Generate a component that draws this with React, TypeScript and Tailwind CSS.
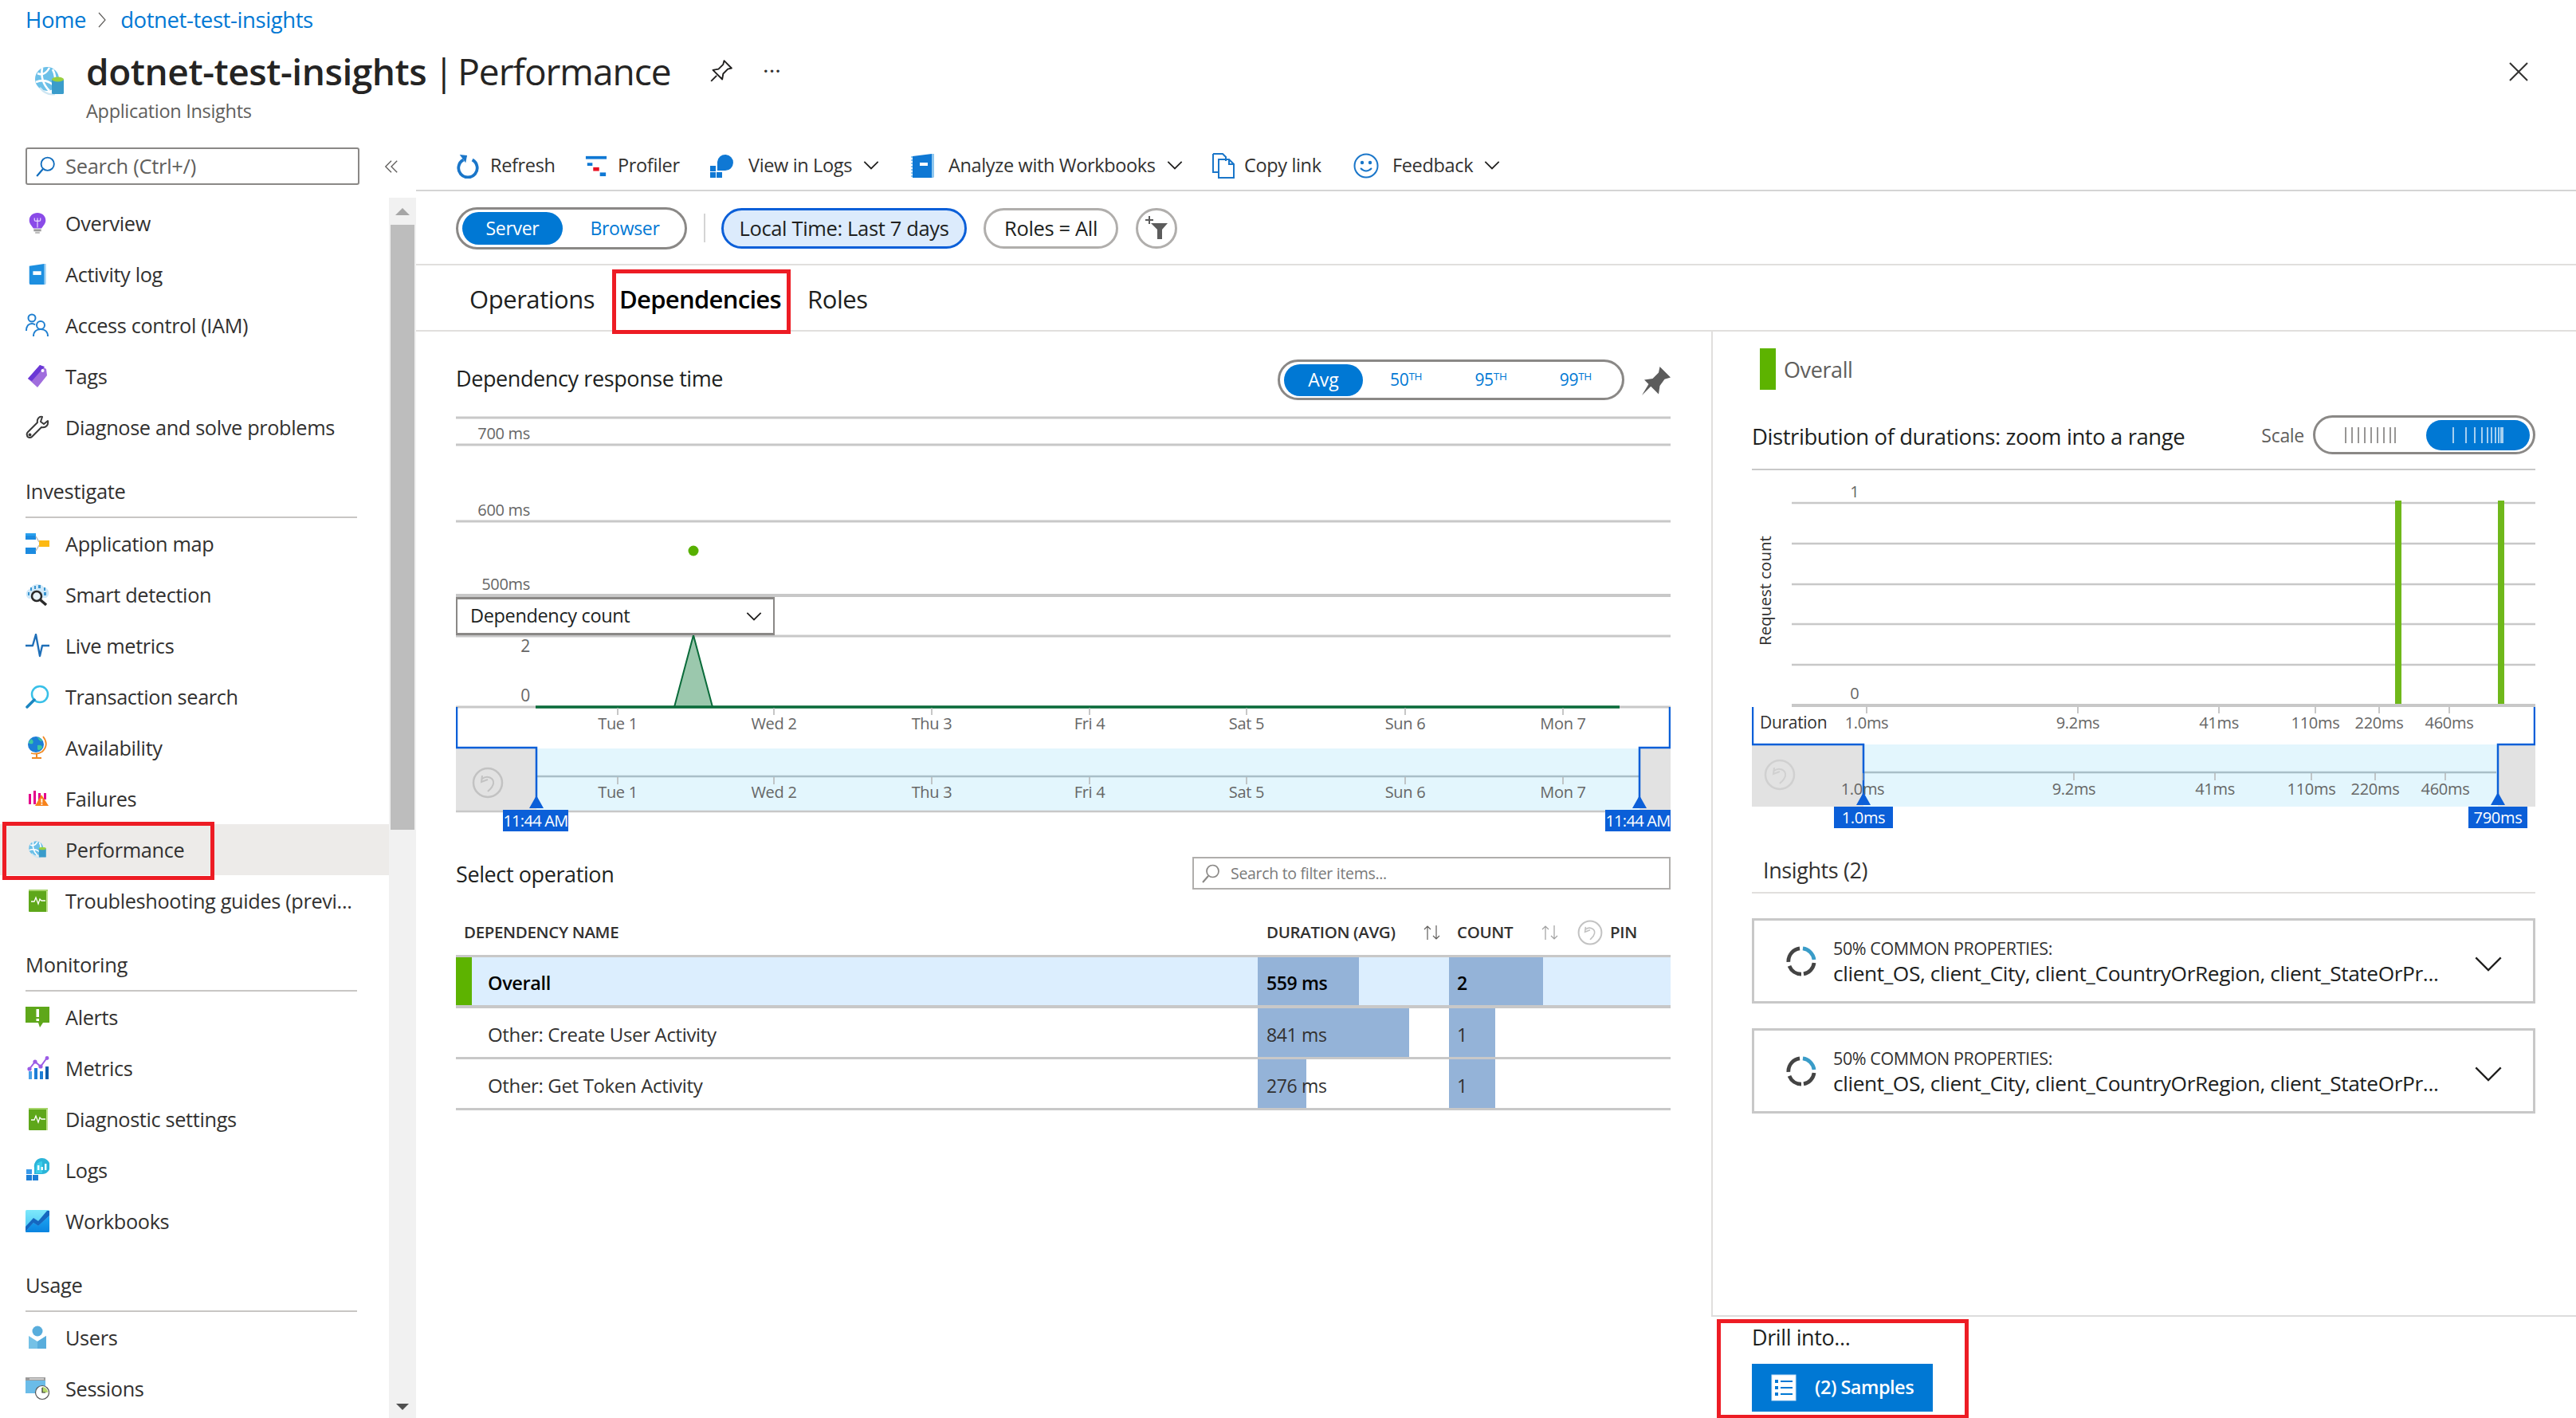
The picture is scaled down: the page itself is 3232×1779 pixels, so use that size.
import React from "react";

type IP = { className?: string };

const AppInsightsIcon = ({ className }: IP) => (
  <svg viewBox="0 0 40 40" className={className}>
    <circle cx="17" cy="17" r="15" fill="#6cc0e8" />
    <path d="M5 10 Q14 14 20 3 M3 21 Q14 16 24 24 M11 3 Q8 20 20 32 M24 5 Q29 14 26 24" stroke="#fff" strokeWidth="2.6" fill="none" />
    <path d="M8 28 Q16 38 27 36" stroke="#cfe6f2" strokeWidth="2.4" fill="none" />
    <rect x="23" y="17" width="15" height="19" rx="1.5" fill="#3a9ccb" />
    <ellipse cx="30.5" cy="17.5" rx="7.5" ry="3" fill="#9ad03f" />
  </svg>
);

const Overview = ({ className }: IP) => (
  <svg viewBox="0 0 30 30" className={className}>
    <path d="M15 1C9 1 4 5 4 11c0 5 3 7 5.500 11h11C23 18 26 16 26 11 26 5 21 1 15 1z" fill="#8a4be8" />
    <path d="M11 8v3c0 1.500 4 1.500 4 0V8M19 8v3c0 1.500-4 1.500-4 0M15 12v9" stroke="#e6d6ff" strokeWidth="1.300" fill="none" />
    <rect x="10" y="23" width="10" height="3" fill="#9a9a9a" />
    <rect x="12" y="26.500" width="6" height="2.500" fill="#bdbdbd" />
  </svg>
);
const BookBlue = ({ className }: IP) => (
  <svg viewBox="0 0 30 30" className={className}>
    <path d="M4 4 L24 1 L26 1 V28 L24 29 H6 Q4 29 4 27z" fill="#1d8fe0" />
    <path d="M24 1h2v27l-2 1z" fill="#9ed0f2" />
    <rect x="9" y="11" width="11" height="5" fill="#fff" />
  </svg>
);
const Iam = ({ className }: IP) => (
  <svg viewBox="0 0 30 30" fill="none" stroke="#1f7fd0" strokeWidth="2" className={className}>
    <circle cx="8" cy="6" r="4.500" />
    <path d="M1 22c0-6 3-9 7-9 2 0 3 .5 4 1.500" />
    <circle cx="19" cy="15" r="5" />
    <path d="M10 29c0-6 4-9 9-9s9 3 9 9" />
  </svg>
);
const Tag = ({ className }: IP) => (
  <svg viewBox="0 0 30 30" className={className}>
    <path d="M18 1 L26 6 L27 14 L15 29 L3 18z" fill="#a06ddd" />
    <path d="M18 1 L3 18 L8 21 L24 3z" fill="#6a38d6" />
    <circle cx="21.500" cy="8" r="2" fill="#fff" />
  </svg>
);
const Wrench = ({ className }: IP) => (
  <svg viewBox="0 0 30 30" fill="none" stroke="#3a3a3a" strokeWidth="2" strokeLinejoin="round" className={className}>
    <path d="M21 2 L19 8 L23 11 L28 7 C29 12 26 16 20 15 L8 27 C6 29 2 28 2 25 C1 23 2 22 3 21 L15 9 C14 5 17 1 21 2z" />
    <circle cx="5.500" cy="24.500" r="1" />
  </svg>
);
const AppMap = ({ className }: IP) => (
  <svg viewBox="0 0 30 30" className={className}>
    <rect x="0" y="2" width="13" height="8" fill="#1c8be0" />
    <rect x="0" y="2" width="13" height="3" fill="#2aa0ee" />
    <rect x="0" y="20" width="13" height="8" fill="#1c8be0" />
    <rect x="17" y="11" width="13" height="8" fill="#fdb913" />
    <path d="M13 6 L17 13 M13 24 L17 17" stroke="#bdbdbd" strokeWidth="1.500" />
  </svg>
);
const Smart = ({ className }: IP) => (
  <svg viewBox="0 0 30 30" className={className}>
    <path d="M4 20C-1 17 0 9 6 8 8 1 20 0 23 6 29 6 32 15 26 19z" fill="#cfe8f8" />
    <g fill="#3a95d0">
      <rect x="6" y="6" width="2" height="4" />
      <rect x="11" y="4" width="2" height="4" />
      <rect x="16" y="3" width="3" height="4" />
      <rect x="23" y="6" width="2" height="4" />
      <rect x="3" y="12" width="2" height="4" />
      <rect x="23" y="12" width="3" height="4" />
    </g>
    <circle cx="14" cy="17" r="6" fill="#e8f4fb" stroke="#2a2a2a" strokeWidth="2.500" />
    <path d="M18.500 21.500 L26 28" stroke="#2a2a2a" strokeWidth="3.500" />
  </svg>
);
const Live = ({ className }: IP) => (
  <svg viewBox="0 0 30 30" className={className}>
    <path d="M0 15 H9 L13 1 L18 28 L21 15 H30" fill="none" stroke="#1f6fb8" strokeWidth="2.400" strokeLinejoin="round" />
  </svg>
);
const Transaction = ({ className }: IP) => (
  <svg viewBox="0 0 30 30" className={className}>
    <circle cx="18" cy="12" r="10" fill="#fff" stroke="#38c0e8" strokeWidth="2.500" />
    <path d="M11 19 L2 28" stroke="#1c86c0" strokeWidth="3.500" strokeLinecap="round" />
  </svg>
);
const Avail = ({ className }: IP) => (
  <svg viewBox="0 0 30 30" className={className}>
    <circle cx="13" cy="11" r="10" fill="#1c7ed6" />
    <path d="M7 4 Q11 6 9 10 Q4 11 4 8z M15 12 Q21 11 21 15 Q17 20 15 17z M15 2 Q20 3 21 7 Q17 7 15 2z" fill="#3cc8a0" />
    <path d="M22 1 Q30 11 21 20 Q15 24 7 22" stroke="#f08a24" strokeWidth="1.800" fill="none" />
    <path d="M14 23v4M8 28h12" stroke="#f08a24" strokeWidth="2" />
  </svg>
);
const Failures = ({ className }: IP) => (
  <svg viewBox="0 0 30 30" className={className}>
    <g fill="#e3008c">
      <rect x="4" y="9" width="3" height="13" />
      <rect x="10" y="5" width="3" height="17" />
      <rect x="16" y="8" width="3" height="14" />
      <rect x="23" y="8" width="3" height="8" />
    </g>
    <path d="M20 10 L29 24 H12z" fill="#f7821b" />
    <rect x="19.500" y="15" width="1.800" height="5" fill="#fff" />
    <rect x="19.500" y="21" width="1.800" height="1.800" fill="#fff" />
  </svg>
);
const BookGreen = ({ className }: IP) => (
  <svg viewBox="0 0 30 30" className={className}>
    <rect x="4" y="1" width="24" height="28" rx="1" fill="#5ea71a" />
    <rect x="26" y="1" width="2" height="28" fill="#bfe08e" />
    <rect x="4" y="1" width="24" height="2" fill="#a6d46a" />
    <path d="M7 16 H11 L13 11 L16 19 L18 13 L20 15 H25" stroke="#fff" strokeWidth="1.300" fill="none" />
  </svg>
);
const Alerts = ({ className }: IP) => (
  <svg viewBox="0 0 30 30" className={className}>
    <path d="M0 2 H30 V22 H22 L18 28 L16 22 H0z" fill="#5ea71a" />
    <rect x="13.500" y="5" width="3.500" height="10" fill="#fff" />
    <rect x="13.500" y="17" width="3.500" height="3" fill="#fff" />
  </svg>
);
const Metrics = ({ className }: IP) => (
  <svg viewBox="0 0 30 30" className={className}>
    <rect x="4" y="19" width="4" height="10" fill="#4aa3e8" />
    <rect x="11" y="15" width="4" height="14" fill="#1c7ed6" />
    <rect x="18" y="19" width="4" height="10" fill="#1c7ed6" />
    <rect x="25" y="13" width="4" height="16" fill="#0d5cab" />
    <path d="M5 16 L12 7 L19 13 L27 2" stroke="#9c5ce6" strokeWidth="2" fill="none" />
    <g fill="#9c5ce6">
      <circle cx="5" cy="16" r="2.600" />
      <circle cx="12" cy="7" r="2.600" />
      <circle cx="19" cy="13" r="2.600" />
      <circle cx="27" cy="2.500" r="2.400" />
    </g>
  </svg>
);
const Logs = ({ className }: IP) => (
  <svg viewBox="0 0 30 30" className={className}>
    <rect x="1" y="14" width="7" height="6" fill="#3a9bea" />
    <rect x="1" y="21" width="7" height="7" fill="#1c7ed6" />
    <rect x="9" y="21" width="7" height="7" fill="#1c7ed6" />
    <path d="M11 20V12A10 10 0 1 1 21 20z" fill="#2bb4d8" />
    <path d="M13 19V12A8 8 0 0 1 21 4V19z" fill="#3ccdea" />
    <g fill="#fff">
      <rect x="15" y="9" width="2.400" height="6" />
      <rect x="19.500" y="11" width="2.400" height="4" />
      <rect x="24" y="7" width="2.400" height="8" />
    </g>
  </svg>
);
const Workbooks = ({ className }: IP) => (
  <svg viewBox="0 0 30 30" className={className}>
    <defs>
      <linearGradient id="wbg" x1="0" y1="0" x2="0" y2="1">
        <stop offset="0" stopColor="#7de8fb" />
        <stop offset="1" stopColor="#46c3f4" />
      </linearGradient>
      <linearGradient id="wbf" x1="0" y1="0" x2="0" y2="1">
        <stop offset="0" stopColor="#1ea6f2" />
        <stop offset="1" stopColor="#0a84e0" />
      </linearGradient>
    </defs>
    <rect x="0" y="1" width="30" height="28" rx="1.500" fill="url(#wbg)" />
    <path d="M0 28 L10 17 L16 21 L30 8 V27.500 Q30 29 28.500 29 H1.500 Q0 29 0 28z" fill="url(#wbf)" />
    <path d="M0 22 L10 11 L16 15 L27 2 L30 2 V8 L16 21 L10 17 L0 28z" fill="#1567c0" />
  </svg>
);
const Users = ({ className }: IP) => (
  <svg viewBox="0 0 30 30" className={className}>
    <circle cx="15" cy="7" r="6.500" fill="#58addc" />
    <path d="M4 13 L15 20 L26 13 V29 H4z" fill="#74c1e6" />
    <path d="M15 20 L26 13 V29 H15z" fill="#58addc" />
  </svg>
);
const Sessions = ({ className }: IP) => (
  <svg viewBox="0 0 30 30" className={className}>
    <rect x="0" y="1" width="25" height="20" fill="#6bbce8" />
    <rect x="0" y="1" width="25" height="4" fill="#9a9a9a" />
    <rect x="5" y="2.500" width="18" height="1" fill="#fff" />
    <circle cx="21" cy="20" r="8.500" fill="#fff" stroke="#555" strokeWidth="1.200" />
    <path d="M21 13 A7 7 0 0 1 28 20 H21z" fill="#b7d96a" />
    <path d="M21 14v6h4" stroke="#333" strokeWidth="1.200" fill="none" />
  </svg>
);
const SearchIcon = ({ className, color = "#0f6cbd" }: IP & { color?: string }) => (
  <svg viewBox="0 0 24 24" fill="none" stroke={color} strokeWidth="1.700" className={className}>
    <circle cx="14.500" cy="9" r="7.500" />
    <path d="M9 15 L2 23" strokeWidth="2" />
  </svg>
);
const ChevDown = ({ className, sw = 2.2 }: IP & { sw?: number }) => (
  <svg viewBox="0 0 24 14" fill="none" stroke="#201f1e" strokeWidth={sw} className={className}>
    <path d="M1 1 L12 12 L23 1" />
  </svg>
);
const Refresh = ({ className }: IP) => (
  <svg viewBox="0 0 32 32" className={className}>
    <path d="M10 6 A12.500 12.500 0 1 0 22 6" fill="none" stroke="#1a76c9" strokeWidth="4" transform="translate(0 2)" />
    <path d="M5 1 L15 2 L13 12z" fill="#1a76c9" />
  </svg>
);
const Profiler = ({ className }: IP) => (
  <svg viewBox="0 0 30 30" className={className}>
    <rect x="1" y="2" width="28" height="4" fill="#0f78d4" />
    <rect x="3" y="11" width="7" height="4" fill="#0f78d4" />
    <rect x="11" y="17" width="8" height="5" fill="#e81123" />
    <rect x="20" y="24" width="8" height="5" fill="#0f78d4" />
  </svg>
);
const ViewLogs = ({ className }: IP) => (
  <svg viewBox="0 0 32 32" className={className}>
    <rect x="1" y="16" width="7" height="7" fill="#0f78d4" />
    <rect x="1" y="24" width="7" height="7" fill="#0f78d4" />
    <rect x="9" y="24" width="7" height="7" fill="#0f78d4" />
    <path d="M10 22V11A10 10 0 1 1 20 22z" fill="#0f78d4" />
  </svg>
);
const Workbook = ({ className }: IP) => (
  <svg viewBox="0 0 30 32" className={className}>
    <path d="M2 4 L26 1 H29 V30 L26 31 H2z" fill="#0f78d4" />
    <path d="M26 1h3v29l-3 1z" fill="#8fc7ef" />
    <rect x="11" y="12" width="10" height="4" fill="#fff" />
    <path d="M1 4v27" stroke="#8fc7ef" strokeDasharray="2 2" strokeWidth="2" />
  </svg>
);
const Copy = ({ className }: IP) => (
  <svg viewBox="0 0 30 32" fill="none" stroke="#1a76c9" strokeWidth="2" className={className}>
    <path d="M2 1 H14 L18 5 V10 M2 1 V24 H9" />
    <path d="M9 8 H22 L28 14 V31 H9z" />
    <path d="M22 8v6h6" />
  </svg>
);
const Smile = ({ className }: IP) => (
  <svg viewBox="0 0 32 32" fill="none" stroke="#1a76c9" strokeWidth="2" className={className}>
    <circle cx="16" cy="16" r="14.500" />
    <path d="M9 19 Q16 26 23 19" />
    <circle cx="11" cy="12" r="1.200" fill="#1a76c9" />
    <circle cx="21" cy="12" r="1.200" fill="#1a76c9" />
  </svg>
);
const PinOutline = ({ className }: IP) => (
  <svg viewBox="0 0 24 24" fill="none" stroke="#201f1e" strokeWidth="1.600" strokeLinejoin="round" className={className}>
    <path d="M15 1 L23 9 L19 10 L14 15 L13 21 L3 11 L9 10 L14 5z" />
    <path d="M7 17 L1 23" />
  </svg>
);
const PinSolid = ({ className }: IP) => (
  <svg viewBox="0 0 24 24" fill="#5c5c5c" className={className}>
    <path d="M15 0 L24 9 L19 10.500 L15 16 L14 23 L2 11 L9 10 L14 5z" />
    <path d="M8 16 L0 24 L6 14z" />
  </svg>
);
const FilterAdd = ({ className }: IP) => (
  <svg viewBox="0 0 30 30" className={className}>
    <path d="M8 9 H29 L22 17 V29 H16 V17z" fill="#5c5c5c" />
    <path d="M1 5 H11 M6 0 V10" stroke="#5c5c5c" strokeWidth="2" />
  </svg>
);
const Spinner = ({ className }: IP) => (
  <svg viewBox="0 0 40 40" fill="none" strokeWidth="5" className={className}>
    <g transform="rotate(-90 20 20)">
      <circle cx="20" cy="20" r="17" pathLength={100} stroke="#3a9cc8" strokeDasharray="21 79" strokeDashoffset="-2" />
      <circle cx="20" cy="20" r="17" pathLength={100} stroke="#444" strokeDasharray="20 80" strokeDashoffset="-27" />
      <circle cx="20" cy="20" r="17" pathLength={100} stroke="#444" strokeDasharray="19 81" strokeDashoffset="-50" />
      <circle cx="20" cy="20" r="17" pathLength={100} stroke="#444" strokeDasharray="24 76" strokeDashoffset="-74" />
    </g>
  </svg>
);
const ListIcon = ({ className }: IP) => (
  <svg viewBox="0 0 32 34" className={className}>
    <rect x="1" y="1" width="30" height="32" fill="#fff" stroke="#cfe4f6" strokeWidth="1" />
    <g fill="#0078d4">
      <rect x="5" y="7" width="4" height="4" />
      <rect x="5" y="15" width="4" height="4" />
      <rect x="5" y="23" width="4" height="4" />
      <rect x="12" y="8" width="15" height="2" />
      <rect x="12" y="16" width="15" height="2" />
      <rect x="12" y="24" width="15" height="2" />
    </g>
  </svg>
);
const SortArrows = ({ className, color = "#605e5c" }: IP & { color?: string }) => (
  <svg viewBox="0 0 24 20" fill="none" stroke={color} strokeWidth="1.200" className={className}>
    <path d="M6 19V2M2 6l4-4 4 4" />
    <path d="M17 1v17M13 14l4 4 4-4" />
  </svg>
);
const UndoCircle = ({ className, color = "#c2c2c2" }: IP & { color?: string }) => (
  <svg viewBox="0 0 40 40" fill="none" stroke={color} strokeWidth="2.500" className={className}>
    <circle cx="20" cy="20" r="18" />
    <path d="M13 11 L12 19 L20 16 M13 15 C19 10 28 14 27 21 C26 26 23 28 20 31" strokeWidth="2" />
  </svg>
);

type NavItem = { label: string; Icon: React.FC<IP>; iconClass: string; active?: boolean };

const NavRow = ({ label, Icon, iconClass, active }: NavItem) => (
  <div className={`relative flex h-[64px] items-center pl-[32px] ${active ? "bg-[#edebe9]" : ""}`}>
    <span className="flex h-[32px] w-[30px] shrink-0 items-center justify-center">
      <Icon className={iconClass} />
    </span>
    <span className="ml-[20px] truncate pt-[1px] text-[25.300px] tracking-[-0.35px] text-[#323130]">{label}</span>
    {active && <div className="absolute left-[3px] top-[-3px] h-[73px] w-[266px] border-[5px] border-[#ed1c24]" />}
  </div>
);

const SectionHead = ({ label }: { label: string }) => (
  <div className="ml-[32px] mr-[40px] flex h-[82px] items-end border-b-[2px] border-[#c8c6c4] pb-[13px]">
    <span className="text-[25.500px] font-medium tracking-[-0.3px] text-[#323130]">{label}</span>
  </div>
);

const ic28 = "h-[30px] w-[28px]";
const ic30 = "h-[30px] w-[30px]";

const Sidebar = () => (
  <aside className="flex w-[522px] shrink-0 flex-col">
    <div className="flex h-[71px] shrink-0 items-start pl-[32px] pt-[8px]">
      <div className="flex h-[47px] w-[419px] items-center rounded-[3px] border-[2px] border-[#8a8886] pl-[10px]">
        <SearchIcon className="h-[26px] w-[26px]" />
        <span className="ml-[12px] text-[25.500px] tracking-[-0.3px] text-[#605e5c]">Search (Ctrl+/)</span>
      </div>
      <span className="ml-[31px] mt-[15px] text-[#605e5c]">
        <svg viewBox="0 0 20 20" fill="none" stroke="#605e5c" strokeWidth="1.500" className="h-[18px] w-[18px]">
          <path d="M10 2 L2 10 L10 18 M18 2 L10 10 L18 18" />
        </svg>
      </span>
    </div>
    <div className="flex min-h-0 flex-1">
      <nav className="w-[488px] shrink-0 overflow-hidden">
        <NavRow label="Overview" Icon={Overview} iconClass={ic28} />
        <NavRow label="Activity log" Icon={BookBlue} iconClass={ic28} />
        <NavRow label="Access control (IAM)" Icon={Iam} iconClass={ic30} />
        <NavRow label="Tags" Icon={Tag} iconClass={ic30} />
        <NavRow label="Diagnose and solve problems" Icon={Wrench} iconClass={ic30} />
        <SectionHead label="Investigate" />
        <NavRow label="Application map" Icon={AppMap} iconClass={ic30} />
        <NavRow label="Smart detection" Icon={Smart} iconClass={ic30} />
        <NavRow label="Live metrics" Icon={Live} iconClass={ic30} />
        <NavRow label="Transaction search" Icon={Transaction} iconClass={ic30} />
        <NavRow label="Availability" Icon={Avail} iconClass={ic30} />
        <NavRow label="Failures" Icon={Failures} iconClass={ic30} />
        <NavRow label="Performance" Icon={AppInsightsIcon} iconClass="h-[24px] w-[24px]" active />
        <NavRow label="Troubleshooting guides (previ..." Icon={BookGreen} iconClass={ic30} />
        <SectionHead label="Monitoring" />
        <NavRow label="Alerts" Icon={Alerts} iconClass={ic30} />
        <NavRow label="Metrics" Icon={Metrics} iconClass={ic30} />
        <NavRow label="Diagnostic settings" Icon={BookGreen} iconClass={ic30} />
        <NavRow label="Logs" Icon={Logs} iconClass={ic30} />
        <NavRow label="Workbooks" Icon={Workbooks} iconClass={ic30} />
        <SectionHead label="Usage" />
        <NavRow label="Users" Icon={Users} iconClass={ic30} />
        <NavRow label="Sessions" Icon={Sessions} iconClass={ic30} />
      </nav>
      <div className="flex w-[34px] shrink-0 flex-col items-center bg-[#f1f1f1]">
        <div className="flex h-[34px] w-full items-center justify-center bg-[#f1f1f1]">
          <div className="h-0 w-0 border-x-[9px] border-b-[9px] border-x-transparent border-b-[#a6a6a6]" />
        </div>
        <div className="h-[759px] w-[30px] bg-[#bdbdbd]" />
        <div className="mb-[10px] mt-auto h-0 w-0 border-x-[8px] border-t-[8px] border-x-transparent border-t-[#505050]" />
      </div>
    </div>
  </aside>
);

const Tool = ({ w, icon, label, chev, gap }: { w: string; icon: React.ReactNode; label: string; chev?: boolean; gap: string }) => (
  <div className={`flex items-center ${w}`}>
    {icon}
    <span className={`text-[23.500px] tracking-[-0.35px] text-[#323130] ${gap}`}>{label}</span>
    {chev && <ChevDown className="ml-[14px] h-[11px] w-[20px]" />}
  </div>
);

const Toolbar = () => (
  <div className="flex h-[63px] shrink-0 items-center border-b-[2px] border-[#d4d4d4] pl-[50px]">
    <Tool w="w-[162px]" gap="ml-[13px]" icon={<Refresh className="h-[32px] w-[30px]" />} label="Refresh" />
    <Tool w="w-[156px]" gap="ml-[13px]" icon={<Profiler className="h-[30px] w-[28px]" />} label="Profiler" />
    <Tool w="w-[253px]" gap="ml-[17px]" icon={<ViewLogs className="h-[32px] w-[32px]" />} label="View in Logs" chev />
    <Tool w="w-[377px]" gap="ml-[17px]" icon={<Workbook className="h-[32px] w-[30px]" />} label="Analyze with Workbooks" chev />
    <Tool w="w-[178px]" gap="ml-[11px]" icon={<Copy className="h-[32px] w-[30px]" />} label="Copy link" />
    <Tool w="w-[200px]" gap="ml-[17px]" icon={<Smile className="h-[32px] w-[32px]" />} label="Feedback" chev />
  </div>
);

const Filters = () => (
  <div className="flex h-[93px] shrink-0 items-center border-b-[2px] border-[#e1dfdd] pl-[50px] pt-[1px]">
    <div className="flex h-[53px] w-[290px] items-center rounded-full border-[3px] border-[#8a8886] pl-[5px]">
      <div className="flex h-[41px] w-[126px] items-center justify-center rounded-full bg-[#0078d4] text-[23px] tracking-[-0.3px] text-white">Server</div>
      <div className="flex-1 pl-[3px] text-center text-[23px] tracking-[-0.3px] text-[#0078d4]">Browser</div>
    </div>
    <div className="ml-[21px] h-[36px] w-[2px] bg-[#d4d4d4]" />
    <div className="ml-[20px] flex h-[51px] w-[308px] items-center justify-center rounded-full border-[3px] border-[#0b5fd8] bg-[#dcebfc] text-[25.500px] tracking-[-0.35px] text-[#201f1e]">Local Time: Last 7 days</div>
    <div className="ml-[21px] flex h-[51px] w-[169px] items-center justify-center rounded-full border-[3px] border-[#b0aeac] text-[25.500px] tracking-[-0.35px] text-[#201f1e]">Roles = All</div>
    <div className="ml-[22px] flex h-[51px] w-[52px] items-center justify-center rounded-full border-[3px] border-[#b0aeac]">
      <FilterAdd className="h-[30px] w-[30px]" />
    </div>
  </div>
);

const Tabs = () => (
  <div className="relative flex h-[83px] shrink-0 items-center border-b-[2px] border-[#e1dfdd] pl-[67px] pt-[3px] text-[31px] tracking-[-0.45px] text-[#201f1e]">
    <span className="w-[188px]">Operations</span>
    <span className="w-[236px] font-semibold tracking-[-0.7px] text-black">Dependencies</span>
    <span>Roles</span>
    <div className="absolute left-[246px] top-[5px] h-[81px] w-[224px] border-[5px] border-[#ed1c24]" />
  </div>
);

const days = ["Tue 1", "Wed 2", "Thu 3", "Fri 4", "Sat 5", "Sun 6", "Mon 7"];
const dayX = [203, 399, 597, 795, 992, 1191, 1389];

const ResponseChart = () => (
  <div className="relative h-[525px] w-[1524px] shrink-0">
    <svg width="1524" height="525" className="block">
      <g stroke="#c8c8c8" strokeWidth="3">
        <line x1="0" x2="1524" y1="2" y2="2" />
        <line x1="0" x2="1524" y1="36" y2="36" />
        <line x1="0" x2="1524" y1="132" y2="132" />
        <line x1="0" x2="1524" y1="225" y2="225" strokeWidth="4" />
        <line x1="0" x2="1524" y1="276" y2="276" />
        <line x1="0" x2="1524" y1="365" y2="365" />
      </g>
      <g fontSize="20" fill="#666" letterSpacing="-0.3" textAnchor="end">
        <text x="93" y="29">700 ms</text>
        <text x="93" y="125">600 ms</text>
        <text x="93" y="218">500ms</text>
        <text x="93" y="296" fontSize="21">2</text>
        <text x="93" y="358" fontSize="21">0</text>
      </g>
      <circle cx="298" cy="169" r="6.500" fill="#57b000" />
      <path d="M274 365 L298 275 L322 365z" fill="#9bc8ad" stroke="#0a6b3a" strokeWidth="2" />
      <line x1="100" x2="1460" y1="365" y2="365" stroke="#0a6b3a" strokeWidth="3.500" />
      <rect x="0" y="417" width="101" height="78" fill="#e2e2e2" />
      <rect x="101" y="417" width="1384" height="78" fill="#e3f6fd" />
      <rect x="1485" y="417" width="39" height="78" fill="#e2e2e2" />
      <line x1="101" x2="1485" y1="452" y2="452" stroke="#a9bfc8" strokeWidth="2.500" />
      <line x1="0" x2="1524" y1="496" y2="496" stroke="#c8c8c8" strokeWidth="2.500" />
      <path d="M1 365 V416 H101 V480 M1523 365 V416 H1485 V480" fill="none" stroke="#0b5fd8" strokeWidth="2.500" />
      <g stroke="#b5b5b5" strokeWidth="1.500">
        {dayX.map((x) => (
          <g key={x}>
            <line x1={x} x2={x} y1="366" y2="375" />
            <line x1={x} x2={x} y1="453" y2="462" />
          </g>
        ))}
      </g>
      <g fontSize="20" fill="#666" letterSpacing="-0.3" textAnchor="middle">
        {days.map((d, i) => (
          <g key={d}>
            <text x={dayX[i]} y="393">{d}</text>
            <text x={dayX[i]} y="479">{d}</text>
          </g>
        ))}
      </g>
      <path d="M101 476 L92 492 H110z M1485 476 L1476 492 H1494z" fill="#0b5fd8" />
      <rect x="59" y="494" width="82" height="27" fill="#0b5fd8" />
      <rect x="1442" y="494" width="82" height="27" fill="#0b5fd8" />
      <g fontSize="20" fill="#fff" textAnchor="middle" letterSpacing="-0.7">
        <text x="100" y="515">11:44 AM</text>
        <text x="1483" y="515">11:44 AM</text>
      </g>
    </svg>
    <UndoCircle className="absolute left-[20px] top-[440px] h-[40px] w-[40px]" />
    <div className="absolute left-0 top-[227px] flex h-[48px] w-[400px] items-center justify-between border-x-[2px] border-b-[3px] border-t-[3px] border-[#8a8886] bg-white pl-[16px] pr-[14px]">
      <span className="text-[23.500px] tracking-[-0.35px] text-[#201f1e]">Dependency count</span>
      <ChevDown className="h-[11px] w-[20px]" />
    </div>
  </div>
);

const Seg = ({ n }: { n: string }) => (
  <div className="flex-1 pl-[2px] text-center text-[21px] tracking-[-0.3px] text-[#0078d4]">
    {n}
    <span className="align-[7px] text-[13.500px]">TH</span>
  </div>
);

const TableRow = ({
  name, nameClass, dur, durW, count, countW, bold, strip,
}: { name: string; nameClass?: string; dur: string; durW: string; count: string; countW: string; bold?: boolean; strip?: boolean }) => (
  <div className={`relative flex w-[1524px] items-center text-[23px] tracking-[-0.35px] ${bold ? "h-[64px] border-b-[4px] border-[#c8c8c8] bg-[#dceefe] font-semibold text-black" : "h-[64px] border-b-[3px] border-[#c8c8c8] text-[#323130]"}`}>
    {strip && <div className="h-full w-[20px] shrink-0 bg-[#5db300]" />}
    <div className={`${strip ? "w-[986px] pl-[20px]" : "w-[1006px] pl-[40px]"} shrink-0 pt-[5px] ${nameClass ?? ""}`}>{name}</div>
    <div className="relative flex h-full w-[240px] shrink-0 items-center pl-[11px]">
      <div className={`absolute inset-y-0 left-0 bg-[#94b3d8] ${durW}`} />
      <span className="relative pt-[5px]">{dur}</span>
    </div>
    <div className="relative flex h-full flex-1 items-center pl-[10px]">
      <div className={`absolute inset-y-0 left-0 bg-[#94b3d8] ${countW}`} />
      <span className="relative pt-[5px]">{count}</span>
    </div>
  </div>
);

const LeftPanel = () => (
  <div className="flex w-[1625px] shrink-0 flex-col pl-[50px]">
    <div className="flex h-[106px] w-[1524px] shrink-0 items-start pt-[35px]">
      <span className="mt-[4px] text-[27px] tracking-[-0.4px] text-[#201f1e]">Dependency response time</span>
      <div className="ml-auto flex h-[51px] w-[435px] items-center rounded-full border-[3px] border-[#8a8886] pl-[5px] pr-[6px]">
        <div className="flex h-[40px] w-[99px] items-center justify-center rounded-full bg-[#0078d4] text-[23px] text-white">Avg</div>
        <Seg n="50" />
        <Seg n="95" />
        <Seg n="99" />
      </div>
      <PinSolid className="ml-[22px] mt-[9px] h-[36px] w-[36px]" />
    </div>
    <ResponseChart />
    <div className="flex h-[102px] w-[1524px] shrink-0 items-start pt-[28px]">
      <span className="mt-[2px] text-[27px] tracking-[-0.4px] text-[#201f1e]">Select operation</span>
      <div className="ml-auto flex h-[41px] w-[600px] items-center border-[2px] border-[#b0aeac] pl-[9px]">
        <SearchIcon className="h-[24px] w-[24px]" color="#8a8886" />
        <span className="ml-[13px] text-[19.500px] tracking-[-0.3px] text-[#7a7a7a]">Search to filter items...</span>
      </div>
    </div>
    <div className="relative flex h-[52px] w-[1524px] shrink-0 items-center border-b-[3px] border-[#c8c8c8] pb-[8px] pl-[10px] text-[20.500px] font-semibold tracking-[-0.35px] text-[#323130]">
      <span className="w-[1007px]">DEPENDENCY NAME</span>
      <span className="w-[196px]">DURATION (AVG)</span>
      <SortArrows className="h-[20px] w-[24px]" />
      <span className="ml-[19px] w-[105px]">COUNT</span>
      <SortArrows className="h-[20px] w-[24px]" color="#a0a0a0" />
      <UndoCircle className="ml-[22px] h-[32px] w-[32px]" />
      <span className="ml-[9px]">PIN</span>
    </div>
    <TableRow name="Overall" nameClass="text-[23.500px]" dur="559 ms" durW="w-[127px]" count="2" countW="w-[118px]" bold strip />
    <TableRow name="Other: Create User Activity" nameClass="text-[24px]" dur="841 ms" durW="w-[190px]" count="1" countW="w-[58px]" />
    <TableRow name="Other: Get Token Activity" nameClass="text-[24px]" dur="276 ms" durW="w-[61px]" count="1" countW="w-[58px]" />
  </div>
);

const durTicks = [
  ["1.0ms", 144], ["9.2ms", 409], ["41ms", 586], ["110ms", 707], ["220ms", 787], ["460ms", 875],
] as const;

const DurationChart = () => (
  <div className="relative h-[455px] w-[983px] shrink-0">
    <svg width="983" height="455" className="block">
      <g stroke="#c8c8c8" strokeWidth="2.500">
        <line x1="50" x2="983" y1="41" y2="41" />
        <line x1="50" x2="983" y1="92" y2="92" />
        <line x1="50" x2="983" y1="143" y2="143" />
        <line x1="50" x2="983" y1="193" y2="193" />
        <line x1="50" x2="983" y1="244" y2="244" />
        <line x1="50" x2="983" y1="295" y2="295" strokeWidth="4" />
      </g>
      <rect x="807" y="38" width="8" height="255" fill="#6fb81a" />
      <rect x="936" y="38" width="8" height="255" fill="#6fb81a" />
      <g fontSize="20" fill="#666" textAnchor="middle">
        <text x="129" y="34">1</text>
        <text x="129" y="287">0</text>
      </g>
      <text transform="translate(24 151) rotate(-90)" textAnchor="middle" fontSize="20.500" fill="#323130">Request count</text>
      <rect x="0" y="344" width="140" height="78" fill="#e2e2e2" />
      <rect x="140" y="344" width="796" height="78" fill="#e3f6fd" />
      <rect x="936" y="344" width="47" height="78" fill="#e2e2e2" />
      <line x1="140" x2="934" y1="379" y2="379" stroke="#a9bfc8" strokeWidth="2.500" />
      <path d="M1 297 V344 H140 V410 M982 297 V344 H936 V410" fill="none" stroke="#0b5fd8" strokeWidth="2.500" />
      <g stroke="#b5b5b5" strokeWidth="1.500">
        {durTicks.map(([, x]) => (
          <g key={x}>
            <line x1={x} x2={x} y1="297" y2="305" />
            <line x1={x - 5} x2={x - 5} y1="380" y2="389" />
          </g>
        ))}
      </g>
      <text x="10" y="324" fontSize="21" fill="#323130" letterSpacing="-0.3">Duration</text>
      <g fontSize="20" fill="#666" textAnchor="middle" letterSpacing="-0.3">
        {durTicks.map(([t, x]) => (
          <g key={t}>
            <text x={x} y="324">{t}</text>
            <text x={x - 5} y="407">{t}</text>
          </g>
        ))}
      </g>
      <path d="M140 404 L131 420 H149z M936 404 L927 420 H945z" fill="#0b5fd8" />
      <rect x="103" y="422" width="74" height="27" fill="#0b5fd8" />
      <rect x="899" y="422" width="74" height="27" fill="#0b5fd8" />
      <g fontSize="20" fill="#fff" textAnchor="middle" letterSpacing="-0.3">
        <text x="140" y="443">1.0ms</text>
        <text x="936" y="443">790ms</text>
      </g>
    </svg>
    <UndoCircle className="absolute left-[15px] top-[362px] h-[40px] w-[40px]" color="#d0d0d0" />
  </div>
);

const InsightCard = () => (
  <div className="flex h-[107px] w-[983px] shrink-0 items-center border-[3px] border-[#c8c8c8] pl-[40px] pr-[38px]">
    <Spinner className="h-[38px] w-[38px] shrink-0" />
    <div className="ml-[21px] flex-1 pt-[2px]">
      <div className="text-[21.500px] leading-[30px] tracking-[-0.4px] text-[#323130]">50% COMMON PROPERTIES:</div>
      <div className="text-[26.300px] leading-[33px] tracking-[-0.4px] text-[#201f1e]">client_OS, client_City, client_CountryOrRegion, client_StateOrPr...</div>
    </div>
    <ChevDown className="mt-[8px] h-[20px] w-[36px]" sw={1.600} />
  </div>
);

const BarsIcon = ({ className, stroke, xs }: IP & { stroke: string; xs: number[] }) => (
  <svg viewBox="0 0 64 20" className={className}>
    {xs.map((x) => (
      <line key={x} x1={x} x2={x} y1="0" y2="20" stroke={stroke} strokeWidth="1.300" />
    ))}
  </svg>
);

const RightPanel = () => (
  <div className="flex min-w-0 flex-1 flex-col">
    <div className="flex min-h-0 flex-1 flex-col border-l-[2px] border-[#e1dfdd] pl-[49px]">
      <div className="mt-[21px] flex h-[52px] shrink-0 items-center pl-[10px]">
        <div className="h-[52px] w-[20px] bg-[#5db300]" />
        <span className="ml-[10px] pt-[2px] text-[27px] tracking-[-0.4px] text-[#605e5c]">Overall</span>
      </div>
      <div className="mt-[32px] flex h-[69px] w-[983px] shrink-0 items-start border-b-[2px] border-[#c8c8c8]">
        <span className="mt-[6px] text-[27.500px] tracking-[-0.42px] text-[#201f1e]">Distribution of durations: zoom into a range</span>
        <span className="ml-auto mr-[11px] mt-[8px] text-[23px] tracking-[-0.3px] text-[#605e5c]">Scale</span>
        <div className="flex h-[49px] w-[279px] items-center rounded-full border-[3px] border-[#8a8886] pl-[37px] pr-[4px]">
          <BarsIcon className="h-[20px] w-[64px]" stroke="#605e5c" xs={[1, 9, 17, 25, 33, 41, 49, 57, 63]} />
          <div className="ml-auto flex h-[38px] w-[130px] items-center justify-center rounded-full bg-[#0078d4]">
            <BarsIcon className="h-[20px] w-[64px]" stroke="#fff" xs={[1, 17, 28, 37, 44, 49, 54, 58, 61, 63]} />
          </div>
        </div>
      </div>
      <DurationChart />
      <div className="flex h-[76px] w-[983px] shrink-0 items-end border-b-[2px] border-[#e1dfdd] pb-[7px] pl-[14px] text-[27px] tracking-[-0.4px] text-[#323130]">Insights (2)</div>
      <div className="mt-[31px] flex flex-col gap-[31px]">
        <InsightCard />
        <InsightCard />
      </div>
    </div>
    <div className="relative h-[129px] shrink-0 border-t-[2px] border-[#dcdcdc] pl-[51px]">
      <div className="pt-[9px] text-[27px] leading-[34px] tracking-[-0.4px] text-[#201f1e]">Drill into...</div>
      <div className="mt-[16px] flex h-[60px] w-[227px] items-center bg-[#0078d4] pl-[24px]">
        <ListIcon className="h-[34px] w-[32px]" />
        <span className="ml-[23px] text-[23.500px] font-semibold tracking-[-0.5px] text-white">(2) Samples</span>
      </div>
      <div className="absolute left-[7px] top-[3px] h-[125px] w-[316px] border-[5px] border-[#ed1c24]" />
    </div>
  </div>
);

export default function App() {
  return (
    <div className="flex h-[1779px] w-[3232px] flex-col overflow-hidden bg-white font-['Open_Sans',sans-serif]">
      <header className="relative h-[177px] shrink-0 pl-[32px]">
        <div className="flex h-[50px] items-center text-[27.500px] tracking-[-0.4px] text-[#0078d4]">
          <span>Home</span>
          <svg viewBox="0 0 10 20" fill="none" stroke="#605e5c" strokeWidth="1.200" className="ml-[15px] h-[20px] w-[10px]">
            <path d="M1 1 L9 10 L1 19" />
          </svg>
          <span className="ml-[18px]">dotnet-test-insights</span>
        </div>
        <div className="flex h-[72px] items-center pt-[6px]">
          <AppInsightsIcon className="ml-[10px] mt-[26px] h-[40px] w-[40px]" />
          <h1 className="ml-[26px] flex items-baseline text-[46px] font-semibold tracking-[-0.45px] text-[#252423]">
            <span>dotnet-test-insights</span>
            <span className="ml-[9px] font-normal">|</span>
            <span className="ml-[5px] font-normal tracking-[-1px]">Performance</span>
          </h1>
          <PinOutline className="ml-[49px] h-[28px] w-[28px]" />
          <span className="mb-[14px] ml-[39px] text-[24px] font-semibold tracking-[1px] text-[#323130]">...</span>
          <svg viewBox="0 0 24 24" fill="none" stroke="#323130" strokeWidth="2" className="absolute left-[3148px] top-[78px] h-[24px] w-[24px]">
            <path d="M1 1 L23 23 M23 1 L1 23" />
          </svg>
        </div>
        <div className="pl-[76px] text-[23.500px] tracking-[-0.3px] text-[#605e5c]">Application Insights</div>
      </header>
      <div className="flex min-h-0 flex-1">
        <Sidebar />
        <main className="flex min-w-0 flex-1 flex-col">
          <Toolbar />
          <Filters />
          <Tabs />
          <div className="flex min-h-0 flex-1">
            <LeftPanel />
            <RightPanel />
          </div>
        </main>
      </div>
    </div>
  );
}
